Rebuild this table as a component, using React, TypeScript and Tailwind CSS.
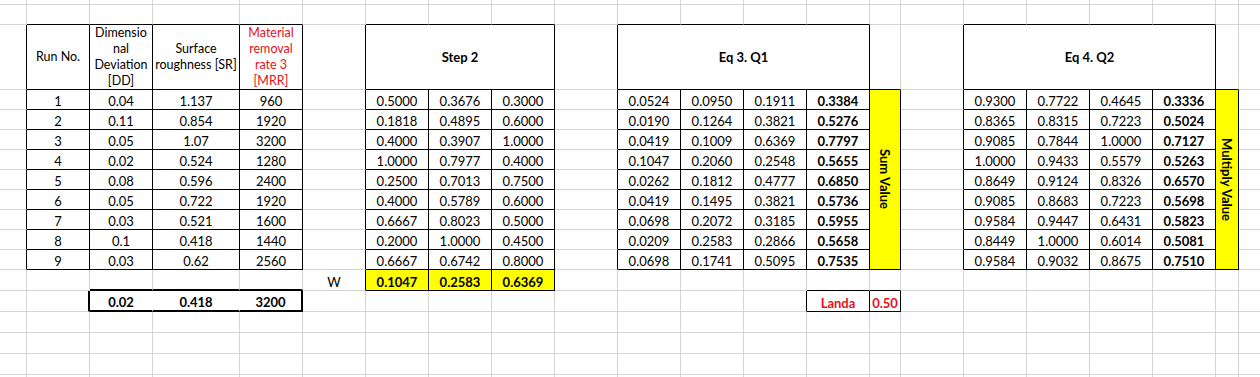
import React from "react";

type Cell = {
  t?: React.ReactNode;
  span?: number;
  rspan?: number;
  bold?: boolean;
  red?: boolean;
  yellow?: boolean;
  vert?: boolean;
  center?: boolean;
  small?: boolean;
};

const NCOLS = 22;
const NROWS = 18;

const DD = ["0.04", "0.11", "0.05", "0.02", "0.08", "0.05", "0.03", "0.1", "0.03"];
const SR = ["1.137", "0.854", "1.07", "0.524", "0.596", "0.722", "0.521", "0.418", "0.62"];
const MRR = ["960", "1920", "3200", "1280", "2400", "1920", "1600", "1440", "2560"];
const STEP2 = [
  ["0.5000", "0.3676", "0.3000"],
  ["0.1818", "0.4895", "0.6000"],
  ["0.4000", "0.3907", "1.0000"],
  ["1.0000", "0.7977", "0.4000"],
  ["0.2500", "0.7013", "0.7500"],
  ["0.4000", "0.5789", "0.6000"],
  ["0.6667", "0.8023", "0.5000"],
  ["0.2000", "1.0000", "0.4500"],
  ["0.6667", "0.6742", "0.8000"],
];
const EQ3 = [
  ["0.0524", "0.0950", "0.1911", "0.3384"],
  ["0.0190", "0.1264", "0.3821", "0.5276"],
  ["0.0419", "0.1009", "0.6369", "0.7797"],
  ["0.1047", "0.2060", "0.2548", "0.5655"],
  ["0.0262", "0.1812", "0.4777", "0.6850"],
  ["0.0419", "0.1495", "0.3821", "0.5736"],
  ["0.0698", "0.2072", "0.3185", "0.5955"],
  ["0.0209", "0.2583", "0.2866", "0.5658"],
  ["0.0698", "0.1741", "0.5095", "0.7535"],
];
const EQ4 = [
  ["0.9300", "0.7722", "0.4645", "0.3336"],
  ["0.8365", "0.8315", "0.7223", "0.5024"],
  ["0.9085", "0.7844", "1.0000", "0.7127"],
  ["1.0000", "0.9433", "0.5579", "0.5263"],
  ["0.8649", "0.9124", "0.8326", "0.6570"],
  ["0.9085", "0.8683", "0.7223", "0.5698"],
  ["0.9584", "0.9447", "0.6431", "0.5823"],
  ["0.8449", "1.0000", "0.6014", "0.5081"],
  ["0.9584", "0.9032", "0.8675", "0.7510"],
];

// [r1, r2, c1, c2]
const BOXES = [
  [2, 11, 1, 4],
  [2, 12, 6, 8],
  [2, 11, 10, 13],
  [3, 11, 14, 14],
  [2, 11, 16, 19],
  [3, 11, 20, 20],
  [13, 13, 13, 14],
];

function inBox(r: number, c: number) {
  return BOXES.some(([r1, r2, c1, c2]) => r >= r1 && r <= r2 && c >= c1 && c <= c2);
}

function buildRows(): (Cell | null)[][] {
  const rows: (Cell | null)[][] = [];
  for (let r = 0; r < NROWS; r++) {
    const row: (Cell | null)[] = [];
    for (let c = 0; c < NCOLS; c++) row.push({});
    rows.push(row);
  }
  const cover = (r: number, c: number, span: number, rspan: number) => {
    for (let rr = r; rr < r + rspan; rr++)
      for (let cc = c; cc < c + span; cc++) if (rr !== r || cc !== c) rows[rr][cc] = null;
  };
  rows[2][1] = { t: "Run No.", center: true, small: true };
  rows[2][2] = {
    t: (
      <>
        Dimensio
        <br />
        nal
        <br />
        Deviation
        <br />
        [DD]
      </>
    ),
    center: true,
    small: true,
  };
  rows[2][3] = {
    t: (
      <>
        Surface
        <br />
        roughness [SR]
      </>
    ),
    center: true,
    small: true,
  };
  rows[2][4] = {
    t: (
      <>
        Material
        <br />
        removal
        <br />
        rate 3
        <br />
        [MRR]
      </>
    ),
    center: true,
    red: true,
    small: true,
  };
  rows[2][6] = { t: "Step 2", span: 3, bold: true, center: true };
  cover(2, 6, 3, 1);
  rows[2][10] = { t: "Eq 3. Q1", span: 4, bold: true, center: true };
  cover(2, 10, 4, 1);
  rows[2][16] = { t: "Eq 4. Q2", span: 4, bold: true, center: true };
  cover(2, 16, 4, 1);

  for (let i = 0; i < 9; i++) {
    const r = 3 + i;
    rows[r][1] = { t: String(i + 1) };
    rows[r][2] = { t: DD[i] };
    rows[r][3] = { t: SR[i] };
    rows[r][4] = { t: MRR[i] };
    rows[r][6] = { t: STEP2[i][0] };
    rows[r][7] = { t: STEP2[i][1] };
    rows[r][8] = { t: STEP2[i][2] };
    rows[r][10] = { t: EQ3[i][0] };
    rows[r][11] = { t: EQ3[i][1] };
    rows[r][12] = { t: EQ3[i][2] };
    rows[r][13] = { t: EQ3[i][3], bold: true };
    rows[r][16] = { t: EQ4[i][0] };
    rows[r][17] = { t: EQ4[i][1] };
    rows[r][18] = { t: EQ4[i][2] };
    rows[r][19] = { t: EQ4[i][3], bold: true };
  }
  rows[3][14] = { t: "Sum Value", rspan: 9, yellow: true, vert: true, bold: true };
  cover(3, 14, 1, 9);
  rows[3][20] = { t: "Multiply Value", rspan: 9, yellow: true, vert: true, bold: true };
  cover(3, 20, 1, 9);

  rows[12][5] = { t: "W" };
  rows[12][6] = { t: "0.1047", yellow: true, bold: true };
  rows[12][7] = { t: "0.2583", yellow: true, bold: true };
  rows[12][8] = { t: "0.6369", yellow: true, bold: true };

  rows[13][2] = { t: "0.02", bold: true };
  rows[13][3] = { t: "0.418", bold: true };
  rows[13][4] = { t: "3200", bold: true };
  rows[13][13] = { t: "Landa", bold: true, red: true };
  rows[13][14] = { t: "0.50", bold: true, red: true };
  return rows;
}

const SPAN: Record<number, string> = { 1: "", 3: "col-span-3", 4: "col-span-4" };
const RSPAN: Record<number, string> = { 1: "", 9: "row-span-9" };

function borderClasses(r: number, c: number, span: number, rspan: number) {
  const lastC = c + span - 1;
  const lastR = r + rspan - 1;
  let right = "border-r border-r-[#d4d4d4]";
  if (r === 13 && (lastC === 1 || lastC === 4)) right = "border-r-2 border-r-black";
  else if (r === 13 && (c === 2 || c === 3)) right = "border-r border-r-white";
  else if (inBox(r, lastC) || inBox(r, lastC + 1)) right = "border-r border-r-black";

  let bottom = "border-b border-b-[#d4d4d4]";
  if ((lastR === 12 || lastR === 13) && c >= 2 && c <= 4) bottom = "border-b-2 border-b-black";
  else if (inBox(lastR, c) || inBox(lastR + 1, c)) bottom = "border-b border-b-black";
  return right + " " + bottom;
}

export default function App() {
  const rows = buildRows();
  const out: React.ReactNode[] = [];
  rows.forEach((row, r) =>
    row.forEach((cell, c) => {
      if (!cell) return;
      const span = cell.span ?? 1;
      const rspan = cell.rspan ?? 1;
      const cls = [
        "flex justify-center text-center overflow-hidden whitespace-nowrap",
        cell.center || cell.vert ? "items-center" : "items-end",
        cell.small ? "text-[12.5px]" : "",
        SPAN[span],
        RSPAN[rspan],
        borderClasses(r, c, span, rspan),
        cell.yellow ? "bg-[#ffff00]" : "bg-white",
        cell.bold ? "font-bold" : "font-normal",
        cell.red ? "text-[#e8101a]" : "text-black",
        cell.vert ? "[writing-mode:vertical-rl]" : "",
      ].join(" ");
      out.push(
        <div key={r + "-" + c} className={cls}>
          {cell.t}
        </div>
      );
    })
  );
  return (
    <div className="w-[1260px] h-[377px] overflow-hidden bg-white font-[Lato,sans-serif] text-[13px] leading-[16px]">
      <div className="grid w-[1302px] grid-cols-[27px_63px_63px_87px_63px_63px_63px_63px_63px_63px_63px_63px_63px_63px_31px_63px_63px_63px_63px_63px_23px_63px] grid-rows-[5px_20px_65px_20px_20px_20px_20px_20px_20px_20px_20px_20px_21px_21px_21px_21px_21px_21px]">
        {out}
      </div>
    </div>
  );
}
